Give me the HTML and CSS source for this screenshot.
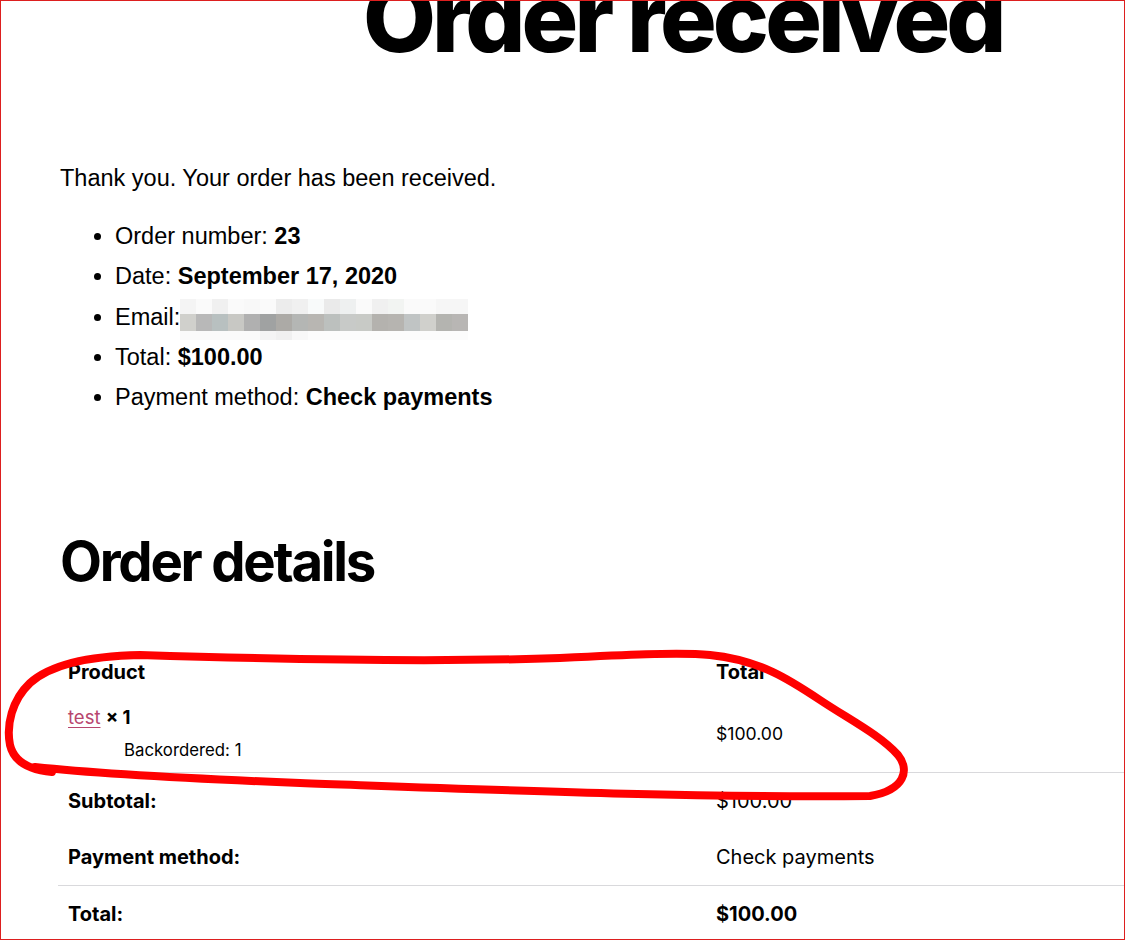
FILE: index.html
```html
<!DOCTYPE html>
<html lang="en">
<head>
    <meta charset="UTF-8">
    <meta name="viewport" content="width=device-width, initial-scale=1.0">
    <title>Order received</title>
    <link rel="stylesheet" href="styles.css">
</head>
<body>
    <div class="frame">
        <h1 class="page-title">Order received</h1>

        <div class="content">
            <p class="thanks">Thank you. Your order has been received.</p>

            <ul class="overview">
                <li>Order number: <strong>23</strong></li>
                <li>Date: <strong>September 17, 2020</strong></li>
                <li>Email:<span class="blurred"><span class="row-a"></span><span class="row-b"></span><span class="row-c"></span></span></li>
                <li>Total: <strong>$100.00</strong></li>
                <li>Payment method: <strong>Check payments</strong></li>
            </ul>

            <h2 class="section-title">Order details</h2>

            <table class="order-table">
                <thead>
                    <tr>
                        <th class="col-name">Product</th>
                        <th>Total</th>
                    </tr>
                </thead>
                <tbody>
                    <tr class="item-row">
                        <td class="col-name">
                            <a href="#">test</a> <strong>× 1</strong>
                            <ul class="item-meta">
                                <li>Backordered: 1</li>
                            </ul>
                        </td>
                        <td class="price">$100.00</td>
                    </tr>
                </tbody>
                <tfoot>
                    <tr class="split">
                        <th>Subtotal:</th>
                        <td>$100.00</td>
                    </tr>
                    <tr>
                        <th>Payment method:</th>
                        <td>Check payments</td>
                    </tr>
                    <tr class="split">
                        <th>Total:</th>
                        <td><strong>$100.00</strong></td>
                    </tr>
                </tfoot>
            </table>
        </div>

        <!-- red marker scribble drawn over the items -->
        <svg class="scribble" width="1125" height="940" viewBox="0 0 1125 940">
            <path d="M 52 772 C 30 770, 14 762, 10 745 C 6 725, 12 700, 30 683 C 50 665, 90 656, 140 655 C 300 660, 450 662, 560 658 C 620 655, 680 652, 710 655 C 760 660, 790 680, 820 700 C 850 720, 880 735, 898 755 C 910 770, 905 790, 870 796 C 700 798, 500 790, 300 783 C 200 779, 100 774, 35 767"
                  fill="none" stroke="#ff0000" stroke-width="8" stroke-linecap="round" stroke-linejoin="round"/>
        </svg>
    </div>
</body>
</html>
```

FILE: styles.css
```css
html, body {
    margin: 0;
    padding: 0;
    background-color: #fff;
}

body {
    font-family: "Liberation Sans", Arial, sans-serif;
    color: #000;
}

/* red frame round the whole capture */
.frame {
    position: relative;
    box-sizing: border-box;
    width: 1125px;
    height: 940px;
    border: 1px solid #dd1f1f;
    overflow: hidden;
}

.page-title {
    font-family: Inter, "Noto Sans", sans-serif;
    font-size: 94.5px;
    font-weight: 800;
    line-height: 94px;
    letter-spacing: -0.0415625em;
    margin: -30px 0 0 362px;
    white-space: nowrap;
}

.content {
    padding-left: 59px;
}

.thanks {
    font-size: 23.5px;
    line-height: 30px;
    margin: 98px 0 0;
}

.overview {
    font-size: 23.5px;
    line-height: 40.3px;
    margin: 23px 0 0;
    padding-left: 55px;
}

.blurred {
    display: inline-block;
    width: 288px;
    vertical-align: -11px;
    margin-bottom: -4px;
}

.blurred span {
    display: block;
}

.blurred .row-a {
    height: 15px;
    background: linear-gradient(to right,
        #f4f4f4 0 16px, #fafafa 16px 32px, #f0f0f0 32px 48px, #fafafa 48px 64px,
        #f8f8f8 64px 80px, #fafafa 80px 96px, #ececec 96px 112px, #f0f0f0 112px 128px,
        #f8fafa 128px 144px, #eaeaea 144px 160px, #eef0f0 160px 176px, #fafafa 176px 192px,
        #f0f0f0 192px 208px, #f2f4f2 208px 224px, #fafafa 224px 256px, #f6f6f6 256px 288px);
}

.blurred .row-b {
    height: 17px;
    background: linear-gradient(to right,
        #d0d0cc 0 16px, #b8b8b8 16px 32px, #b8c0c0 32px 48px, #c8c8c4 48px 64px,
        #b0b0b0 64px 80px, #a0a2a2 80px 96px, #acaaa6 96px 112px, #b4b6b4 112px 128px,
        #b8b6b2 128px 144px, #bcc0be 144px 160px, #c8cac8 160px 176px, #c8cac6 176px 192px,
        #b4b2ae 192px 208px, #b6b4b0 208px 224px, #c0c4c4 224px 240px, #d0d0cc 240px 256px,
        #b4b4b0 256px 272px, #b8b6b4 272px 288px);
}

.blurred .row-c {
    height: 9px;
    background: linear-gradient(to right,
        #fafafa 0 80px, #f4f4f4 80px 96px, #f0f0f0 96px 112px, #f8f8f8 112px 128px,
        #fcfcfc 128px 288px);
}

.section-title {
    font-family: Inter, "Noto Sans", sans-serif;
    font-size: 54.5px;
    font-weight: 700;
    line-height: 56px;
    letter-spacing: -0.0415625em;
    margin: 116px 0 0;
}

/* order details table */
.order-table {
    font-family: Inter, "Noto Sans", sans-serif;
    font-size: 20px;
    line-height: 24px;
    border-collapse: collapse;
    width: 1120px;
    margin: 53px 0 0 -2px;
}

.order-table th,
.order-table td {
    text-align: left;
    padding: 16px 10px;
    vertical-align: middle;
}

.order-table .col-name {
    width: 628px;
}

.order-table thead th {
    font-weight: 700;
    padding: 18px 10px 14px;
}

.item-row td {
    padding: 7px 10px 10px;
}

.item-row .col-name {
    font-size: 18.5px;
}

.item-row .price {
    font-size: 17.6px;
}

.item-row a {
    color: #b8466e;
    text-decoration: underline;
    text-underline-offset: 3px;
}

.item-meta {
    list-style: none;
    margin: 9px 0 0;
    padding-left: 56px;
    font-size: 16.8px;
}

.order-table tfoot th {
    font-weight: 700;
}

.order-table tr.split th,
.order-table tr.split td {
    border-top: 1px solid #d9d9dc;
}

.scribble {
    position: absolute;
    top: -1px;
    left: -1px;
    pointer-events: none;
}
```
